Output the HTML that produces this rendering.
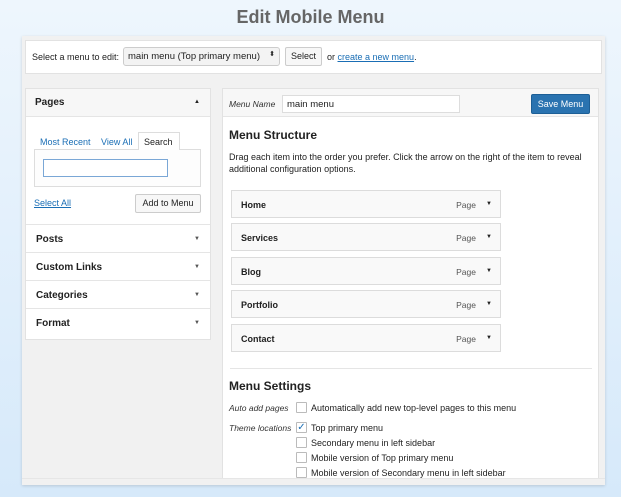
<!DOCTYPE html><html><head><style>
*{box-sizing:border-box;margin:0;padding:0}
body{width:621px;height:497px;overflow:hidden;background:linear-gradient(#eef6fd,#d6e9fa);font-family:"Liberation Sans",sans-serif;font-size:9px;color:#222;position:relative}
.a{position:absolute}
h1{position:absolute;left:0;width:621px;top:7px;text-align:center;font-size:18px;color:#666;font-weight:bold}
.frame{left:22px;top:36px;width:583px;height:449px;background:#f1f1f1;box-shadow:0 1px 3px rgba(0,0,0,.15)}
.box{background:#fff;border:1px solid #e2e2e2}
.btn{background:#f7f7f7;border:1px solid #ccc;border-radius:2px;text-align:center;line-height:16px}
.row{left:0;width:186px;height:28px;border-top:1px solid #e5e5e5;background:#fff;font-weight:bold;font-size:10px;padding:9px 10px}
.row i{position:absolute;right:12px;top:11px;font-style:normal;font-size:6px;color:#555}
.item{left:8px;width:270px;height:28px;border:1px solid #dcdcdc;background:#f9f9f9;font-weight:bold;font-size:9px;padding:9px 9px}
.item span{position:absolute;right:24px;top:9px;font-weight:normal;font-size:8.5px;color:#555}
.item i{position:absolute;right:8px;top:10px;font-style:normal;font-size:6px}
.cb{width:11px;height:11px;border:1px solid #bbb;background:#fff;border-radius:1px}
.lbl{font-size:9px}
.it{font-style:italic;font-size:8.5px;color:#333}
</style></head><body>
<h1>Edit Mobile Menu</h1>
<div class="a frame"></div>
<div class="a box" style="left:25px;top:40px;width:577px;height:34px"></div>
<div class="a" style="left:32px;top:52px">Select a menu to edit:</div>
<div class="a" style="left:123px;top:47px;width:157px;height:19px;border:1px solid #ccc;border-radius:3px;background:#f3f3f3;padding:3px 4px;font-size:9.5px">main menu (Top primary menu) <span style="position:absolute;right:4px;top:2px;font-size:7px">⬍</span></div>
<div class="a btn" style="left:285px;top:47px;width:37px;height:19px">Select</div>
<div class="a" style="left:327px;top:52px">or <span style="color:#1a6eb5;text-decoration:underline">create a new menu</span>.</div>

<div class="a box" style="left:25px;top:88px;width:186px;height:252px;overflow:hidden">
<div class="a" style="left:0;top:0;width:186px;height:28px;background:#f7f7f7;border-bottom:1px solid #e5e5e5;font-weight:bold;font-size:10px;padding:8px 9px">Pages<i style="position:absolute;right:12px;top:10px;font-style:normal;font-size:6px">▲</i></div>
<div class="a" style="left:14px;top:48px;color:#1a6eb5">Most Recent</div>
<div class="a" style="left:75px;top:48px;color:#1a6eb5">View All</div>
<div class="a" style="left:112px;top:43px;width:42px;height:18px;border:1px solid #ddd;border-bottom:none;background:#fff;padding:4px 5px;z-index:2">Search</div>
<div class="a" style="left:8px;top:60px;width:167px;height:38px;border:1px solid #ddd;background:#fdfdfd"></div>
<div class="a" style="left:17px;top:70px;width:125px;height:18px;border:1px solid #7aa7d6;background:#fff"></div>
<div class="a" style="left:8px;top:109px;color:#1a6eb5;text-decoration:underline">Select All</div>
<div class="a btn" style="left:109px;top:105px;width:66px;height:19px">Add to Menu</div>
<div class="a row" style="top:135px">Posts<i>▼</i></div>
<div class="a row" style="top:163px">Custom Links<i>▼</i></div>
<div class="a row" style="top:191px">Categories<i>▼</i></div>
<div class="a row" style="top:219px">Format<i>▼</i></div>
</div>

<div class="a box" style="left:222px;top:88px;width:377px;height:397px;overflow:hidden">
<div class="a" style="left:0;top:0;width:377px;height:28px;background:#f7f7f7;border-bottom:1px solid #e5e5e5"></div>
<div class="a it" style="left:6px;top:10px">Menu Name</div>
<div class="a" style="left:59px;top:6px;width:178px;height:18px;border:1px solid #ddd;background:#fff;padding:3px 4px;font-size:9.5px">main menu</div>
<div class="a" style="left:308px;top:5px;width:59px;height:20px;background:#2a73b0;border:1px solid #1d5f96;border-radius:2px;color:#fff;text-align:center;line-height:18px">Save Menu</div>
<div class="a" style="left:6px;top:39px;font-size:12px;font-weight:bold">Menu Structure</div>
<div class="a" style="left:6px;top:62px;line-height:12px;width:370px">Drag each item into the order you prefer. Click the arrow on the right of the item to reveal additional configuration options.</div>
<div class="a item" style="top:101px">Home<span>Page</span><i>▼</i></div>
<div class="a item" style="top:134px">Services<span>Page</span><i>▼</i></div>
<div class="a item" style="top:168px">Blog<span>Page</span><i>▼</i></div>
<div class="a item" style="top:201px">Portfolio<span>Page</span><i>▼</i></div>
<div class="a item" style="top:235px">Contact<span>Page</span><i>▼</i></div>
<div class="a" style="left:7px;top:279px;width:362px;border-top:1px solid #e5e5e5"></div>
<div class="a" style="left:6px;top:290px;font-size:12px;font-weight:bold">Menu Settings</div>
<div class="a it" style="left:6px;top:314px">Auto add pages</div>
<div class="a cb" style="left:73px;top:313px"></div>
<div class="a lbl" style="left:88px;top:314px">Automatically add new top-level pages to this menu</div>
<div class="a it" style="left:6px;top:334px">Theme locations</div>
<div class="a cb" style="left:73px;top:333px;color:#1a6eb5;font-size:10px;line-height:9px;text-align:center">✓</div>
<div class="a lbl" style="left:88px;top:334px">Top primary menu</div>
<div class="a cb" style="left:73px;top:348px"></div>
<div class="a lbl" style="left:88px;top:349px">Secondary menu in left sidebar</div>
<div class="a cb" style="left:73px;top:363px"></div>
<div class="a lbl" style="left:88px;top:364px">Mobile version of Top primary menu</div>
<div class="a cb" style="left:73px;top:378px"></div>
<div class="a lbl" style="left:88px;top:379px">Mobile version of Secondary menu in left sidebar</div>
</div>
<div class="a" style="left:22px;top:478px;width:583px;height:7px;background:#f1f1f1;border-top:1px solid #e6e6e6"></div>
</body></html>
